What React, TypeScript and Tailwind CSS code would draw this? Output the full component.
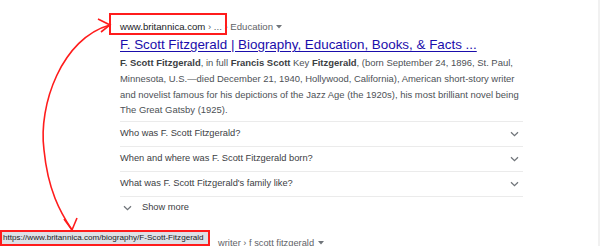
import React from 'react';

const Chevron: React.FC<{ className?: string }> = ({ className }) => (
  <svg className={className} width="9" height="6" viewBox="0 0 9 6" fill="none">
    <path d="M1 1.2 L4.5 4.6 L8 1.2" stroke="#70757a" strokeWidth="1.3" />
  </svg>
);

const faqs = [
  'Who was F. Scott Fitzgerald?',
  'When and where was F. Scott Fitzgerald born?',
  "What was F. Scott Fitzgerald's family like?",
];

const App: React.FC = () => {
  return (
    <div className="relative flex h-[246px] w-[600px] overflow-hidden bg-white font-['Liberation_Sans',Arial,sans-serif]">
      <div className="flex-1 pl-[120px] pt-[19px]">
        {/* breadcrumb */}
        <div className="flex h-[16px] items-center whitespace-nowrap text-[9.6px] leading-[16px]">
          <span className="text-[#202124]">www.britannica.com</span>
          <span className="text-[#5f6368]">&nbsp;› ... › Education</span>
          <svg className="ml-[3px]" width="6" height="4" viewBox="0 0 6 4">
            <path d="M0 0 L6 0 L3 3.5 Z" fill="#70757a" />
          </svg>
        </div>

        {/* title */}
        <a className="block h-[20px] whitespace-nowrap text-[13.4px] leading-[20px] text-[#1a0dab] underline underline-offset-[2px]">
          F. Scott Fitzgerald | Biography, Education, Books, &amp; Facts ...
        </a>

        {/* snippet */}
        <div className="whitespace-nowrap text-[9.45px] leading-[15.8px] text-[#4d5156]">
          <div>
            <b className="text-[#3c4043]">F. Scott Fitzgerald</b>, in full <b className="text-[#3c4043]">Francis Scott</b> Key{' '}
            <b className="text-[#3c4043]">Fitzgerald</b>, (born September 24, 1896, St. Paul,
          </div>
          <div>Minnesota, U.S.—died December 21, 1940, Hollywood, California), American short-story writer</div>
          <div>and novelist famous for his depictions of the Jazz Age (the 1920s), his most brilliant novel being</div>
          <div>The Great Gatsby (1925).</div>
        </div>

        {/* related questions */}
        <div className="mt-[3px] w-[403px] border-t border-[#ebebeb]">
          {faqs.map((q) => (
            <div
              key={q}
              className="flex h-[25px] items-center justify-between border-b border-[#ebebeb] text-[9.3px] text-[#3c4043]"
            >
              <span>{q}</span>
              <Chevron className="mr-[4px]" />
            </div>
          ))}
        </div>

        <div className="flex h-[22px] items-center text-[9.3px] text-[#3c4043]">
          <Chevron className="ml-[3px]" />
          <span className="ml-[10px]">Show more</span>
        </div>

        <div className="mt-[16px] flex h-[16px] items-center whitespace-nowrap pl-[98px] text-[9.3px] leading-[16px] text-[#5f6368]">
          <span>writer › f scott fitzgerald</span>
          <svg className="ml-[4px]" width="6" height="4" viewBox="0 0 6 4">
            <path d="M0 0 L6 0 L3 3.5 Z" fill="#70757a" />
          </svg>
        </div>
      </div>

      {/* scrollbar track */}
      <div className="w-[2px] bg-[#f1f1f1]" />

      {/* annotation: box around the displayed url */}
      <div className="absolute left-[109px] top-[13px] h-[22px] w-[118px] border-2 border-[#ff1c1c]" />

      {/* annotation: curved arrow */}
      <svg className="absolute left-0 top-0" width="600" height="246" viewBox="0 0 600 246" fill="none">
        <path
          d="M110 25 C 62 38 38 105 44 150 C 48 190 60 212 72 230"
          stroke="#ff1c1c"
          strokeWidth="1.6"
        />
        <path d="M98 19 L110 25 L101 32" stroke="#ff1c1c" strokeWidth="1.6" />
        <path d="M64 219 L72 230 L77 218" stroke="#ff1c1c" strokeWidth="1.6" />
      </svg>

      {/* browser status bubble */}
      <div className="absolute bottom-0 left-0 flex h-[16px] w-[210px] items-center whitespace-nowrap border-2 border-[#ff1c1c] bg-[#dee1e6] pl-[1px] text-[8.1px] text-[#202124]">
        https://www.britannica.com/biography/F-Scott-Fitzgerald
      </div>
    </div>
  );
};

export default App;
